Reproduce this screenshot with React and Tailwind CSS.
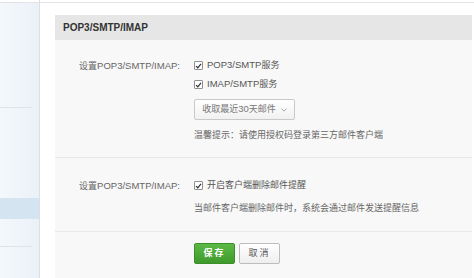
import { useState } from "react";

const font = { fontFamily: '"Liberation Sans", "Noto Sans CJK SC", sans-serif' };

// latin runs in the reference are drawn a touch larger than the CJK ones
const L = ({ children }) => <span className="text-[9.5px]">{children}</span>;

function Check({ checked, children }) {
  return (
    <label className="flex items-center h-[19px] gap-[4px] text-[#555] cursor-pointer">
      <span className="w-[9px] h-[9px] border border-[#8f8f8f] bg-white rounded-[1px] flex items-center justify-center">
        {checked && (
          <svg viewBox="0 0 10 10" className="w-[8px] h-[8px]">
            <path d="M1.5 5.2 L4 7.6 L8.6 2" fill="none" stroke="#333" strokeWidth="1.8" />
          </svg>
        )}
      </span>
      <span>{children}</span>
    </label>
  );
}

export default function App() {
  const [pop, setPop] = useState(true);
  return (
    <div className="w-[474px] h-[278px] bg-white flex overflow-hidden text-[9px]" style={font}>
      {/* sidebar */}
      <div className="w-[40px] shrink-0 flex flex-col border-r border-[#dcdfe3] bg-gradient-to-r from-[#f4f8fb] to-[#eaf1f8]">
        <div className="h-[3px] bg-white border-b border-[#e3e3e3]" />
        <div className="h-[104px]" />
        <div className="h-px w-[32px] bg-[#dde3ea]" />
        <div className="h-[90px]" />
        <div className="h-[21px] bg-[#d5e4f1]" />
        <div className="h-[27px]" />
        <div className="h-px w-[32px] bg-[#dde3ea]" />
      </div>

      {/* main */}
      <div className="flex-1 flex flex-col">
        <div className="h-[3px] border-b border-[#e3e3e3]" />
        <div className="mt-[12px] ml-[15px] mr-[2px] flex-1 flex flex-col bg-[#f8f8f8]">
          <div className="h-[25px] bg-[#e6e6e6] flex items-center pl-[8px] font-bold text-[#333] text-[10px]">
            POP3/SMTP/IMAP
          </div>

          <div className="flex pt-[16px] pb-[15px] border-b border-[#e8e8e8]">
            <div className="w-[125px] text-right text-[#666] leading-[19px]">设置<L>POP3/SMTP/IMAP:</L></div>
            <div className="ml-[14px] flex flex-col">
              <div onClick={() => setPop(!pop)}>
                <Check checked={pop}><L>POP3/SMTP</L>服务</Check>
              </div>
              <Check checked><L>IMAP/SMTP</L>服务</Check>
              <button className="mt-[5px] w-[101px] h-[21px] border border-[#c9c9c9] rounded-[2px] bg-gradient-to-b from-white to-[#f1f1f1] text-[#777] flex items-center justify-center gap-[5px]">
                <span>收取最近<L>30</L>天邮件</span>
                <svg viewBox="0 0 8 5" className="w-[6px] h-[4px]">
                  <path d="M0.5 0.5 L4 4 L7.5 0.5" fill="none" stroke="#888" strokeWidth="1" />
                </svg>
              </button>
              <div className="mt-[8px] text-[#666] leading-[14px]">温馨提示：请使用授权码登录第三方邮件客户端</div>
            </div>
          </div>

          <div className="flex pt-[18px] pb-[16px] border-b border-[#e8e8e8]">
            <div className="w-[125px] text-right text-[#666] leading-[19px]">设置<L>POP3/SMTP/IMAP:</L></div>
            <div className="ml-[14px] flex flex-col">
              <Check checked>开启客户端删除邮件提醒</Check>
              <div className="mt-[6px] text-[#666] leading-[14px]">当邮件客户端删除邮件时，系统会通过邮件发送提醒信息</div>
            </div>
          </div>

          <div className="flex pt-[11px] pl-[139px] gap-[4px]">
            <button className="w-[41px] h-[21px] rounded-[2px] bg-gradient-to-b from-[#5cb946] to-[#3f9a2c] border border-[#3a8f28] text-white font-bold tracking-[2px]">
              保存
            </button>
            <button className="w-[41px] h-[21px] rounded-[2px] bg-gradient-to-b from-white to-[#eeeeee] border border-[#bdbdbd] text-[#555] tracking-[2px]">
              取消
            </button>
          </div>
        </div>
      </div>
    </div>
  );
}
